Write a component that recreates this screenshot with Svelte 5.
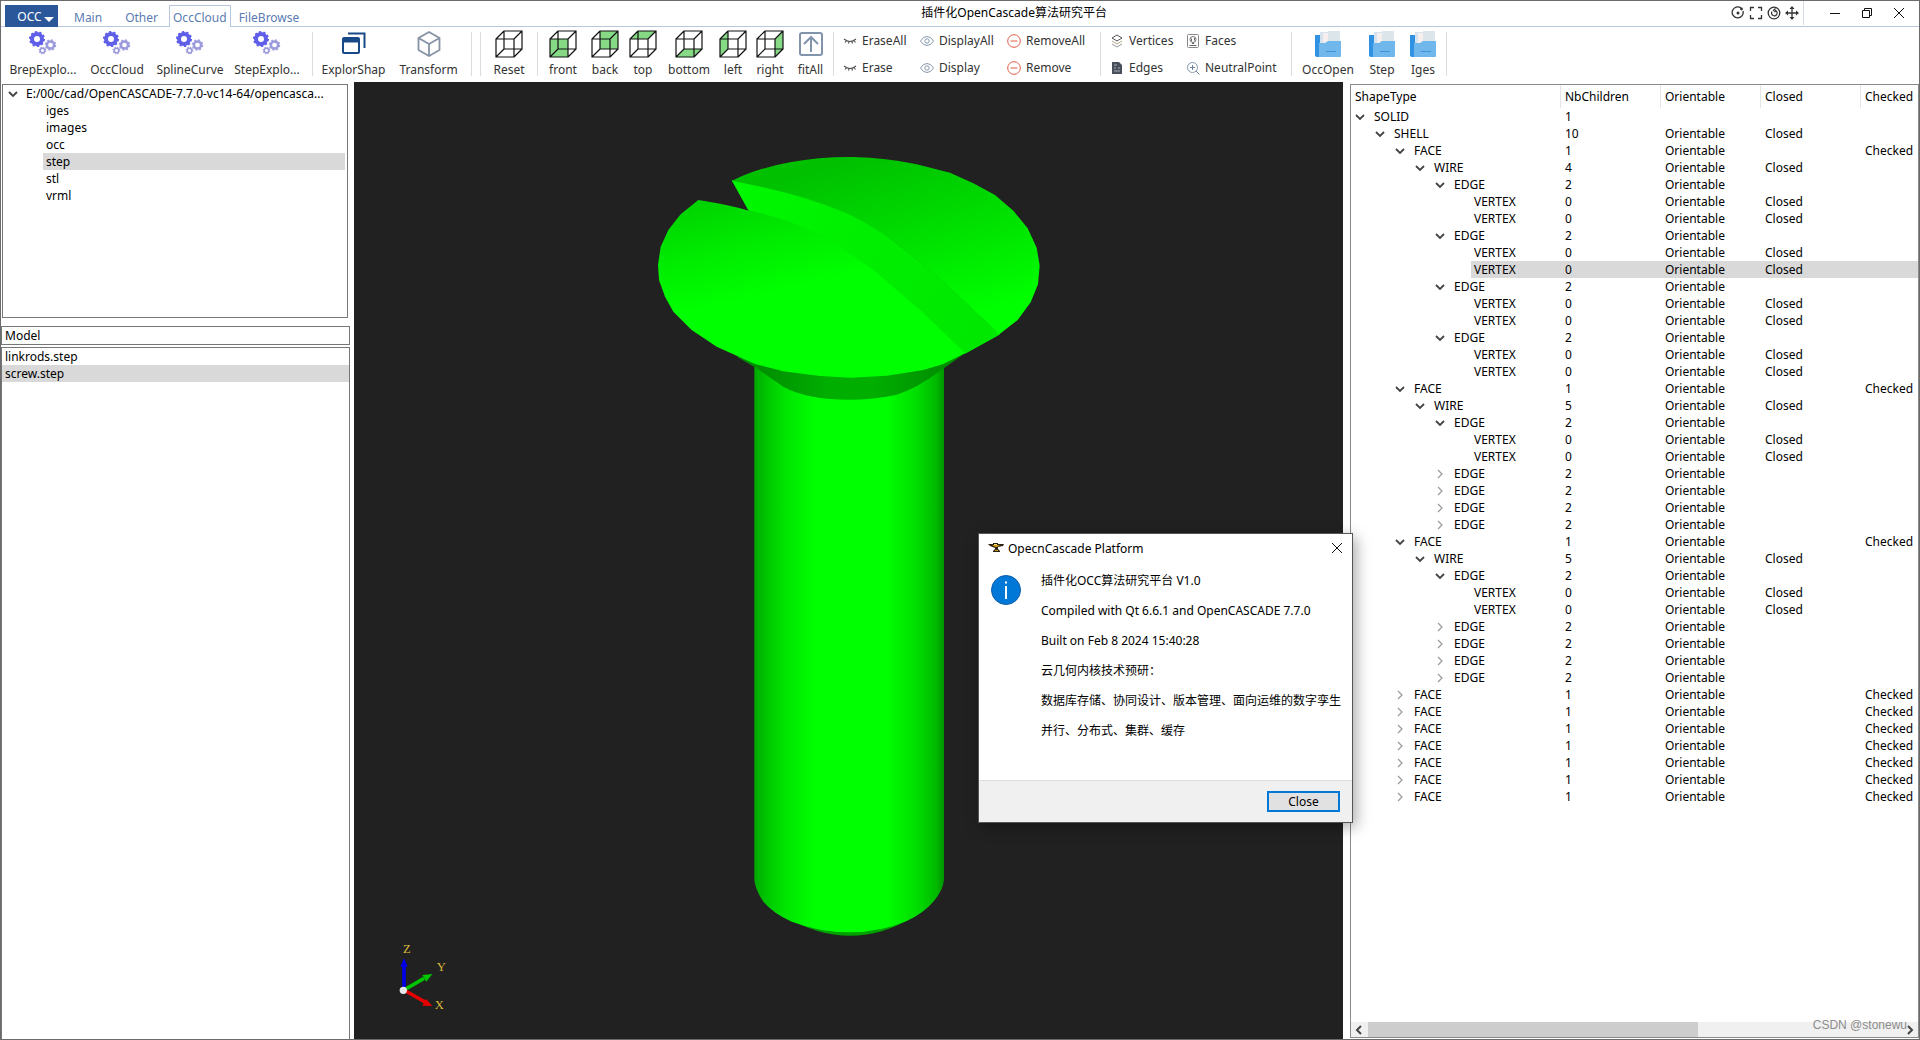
<script lang="ts">
    type Tool = { label: string; icon: string; width: number };

    const tabs = ['Main', 'Other', 'OccCloud', 'FileBrowse'];
    let activeTab = $state('OccCloud');

    const groups: Tool[][] = [
        [
            { label: 'BrepExplo...', icon: 'gears', width: 74 },
            { label: 'OccCloud', icon: 'gears', width: 74 },
            { label: 'SplineCurve', icon: 'gears', width: 72 },
            { label: 'StepExplo...', icon: 'gears', width: 82 }
        ],
        [
            { label: 'ExplorShap', icon: 'windows', width: 73 },
            { label: 'Transform', icon: 'box', width: 77 }
        ],
        [],
        [{ label: 'Reset', icon: 'cube', width: 48 }],
        [
            { label: 'front', icon: 'cube', width: 42 },
            { label: 'back', icon: 'cube', width: 42 },
            { label: 'top', icon: 'cube', width: 34 },
            { label: 'bottom', icon: 'cube', width: 58 },
            { label: 'left', icon: 'cube', width: 30 },
            { label: 'right', icon: 'cube', width: 44 },
            { label: 'fitAll', icon: 'fit', width: 37 }
        ]
    ];

    const fileTools: Tool[] = [
        { label: 'OccOpen', icon: 'folder', width: 64 },
        { label: 'Step', icon: 'folder', width: 44 },
        { label: 'Iges', icon: 'folder', width: 38 }
    ];

    const displayTools = [
        { label: 'EraseAll', icon: 'closed' },
        { label: 'DisplayAll', icon: 'eye' },
        { label: 'RemoveAll', icon: 'minus' },
        { label: 'Erase', icon: 'closed' },
        { label: 'Display', icon: 'eye' },
        { label: 'Remove', icon: 'minus' }
    ];

    const selectTools = [
        { label: 'Vertices', icon: 'layers' },
        { label: 'Faces', icon: 'face' },
        { label: 'Edges', icon: 'doc' },
        { label: 'NeutralPoint', icon: 'zoom' }
    ];

    // highlighted side of the view cube
    const sides: Record<string, string> = {
        front: '1,9 19,9 19,27 1,27',
        back: '9,1 27,1 27,19 9,19',
        top: '1,9 9,1 27,1 19,9',
        bottom: '1,27 9,19 27,19 19,27',
        left: '1,9 9,1 9,19 1,27',
        right: '19,9 27,1 27,19 19,27'
    };

    const folders = ['iges', 'images', 'occ', 'step', 'stl', 'vrml'];
    let folder = $state('step');

    const models = ['linkrods.step', 'screw.step'];
    let model = $state('screw.step');

    type Row = { depth: number; type: string; count: number; open: boolean };

    const row = (depth: number, type: string, count: number, open = true): Row => ({ depth, type, count, open });

    function openEdge() {
        return [row(4, 'EDGE', 2), row(5, 'VERTEX', 0), row(5, 'VERTEX', 0)];
    }

    function sideFace() {
        const closed = Array.from({ length: 4 }, () => row(4, 'EDGE', 2, false));
        return [row(2, 'FACE', 1), row(3, 'WIRE', 5), ...openEdge(), ...closed];
    }

    const rows: Row[] = [
        row(0, 'SOLID', 1),
        row(1, 'SHELL', 10),
        row(2, 'FACE', 1),
        row(3, 'WIRE', 4),
        ...openEdge(),
        ...openEdge(),
        ...openEdge(),
        ...openEdge(),
        ...sideFace(),
        ...sideFace(),
        ...Array.from({ length: 7 }, () => row(2, 'FACE', 1, false))
    ];
    let selectedRow = $state(9);

    const closedTypes = ['SHELL', 'WIRE', 'VERTEX'];

    const about = [
        '插件化OCC算法研究平台 V1.0',
        'Compiled with Qt 6.6.1 and OpenCASCADE 7.7.0',
        'Built on Feb 8 2024 15:40:28',
        '云几何内核技术预研：',
        '数据库存储、协同设计、版本管理、面向运维的数字孪生',
        '并行、分布式、集群、缓存'
    ];
    let showAbout = $state(true);
</script>

{#snippet chevron(open: boolean)}
    <svg class="chevron" viewBox="0 0 10 10" width="10" height="10" aria-hidden="true">
        {#if open}
            <path d="M1 3l4 4 4-4" fill="none" stroke="#444" stroke-width="1.8" />
        {:else}
            <path d="M3 1l4 4-4 4" fill="none" stroke="#999" stroke-width="1.2" />
        {/if}
    </svg>
{/snippet}

{#snippet bigTool(tool: Tool)}
    <button class="tool" style:width="{tool.width}px">
        <svg viewBox="0 0 28 28" width="28" height="28" fill="none" aria-hidden="true">
            {#if tool.icon === 'gears'}
                <circle cx="8" cy="9" r="5" stroke="#5f5fe8" stroke-width="4" />
                <circle cx="8" cy="9" r="7" stroke="#5f5fe8" stroke-width="2" stroke-dasharray="2.2 2.2" />
                <circle cx="21.500" cy="15" r="3.600" stroke="#9c9cdc" stroke-width="2.500" />
                <circle cx="21.500" cy="15" r="5" stroke="#9c9cdc" stroke-width="1.500" stroke-dasharray="1.96 1.96" />
                <circle cx="13.500" cy="20.500" r="2.300" stroke="#9c9cdc" stroke-width="1.600" />
                <circle cx="13.500" cy="20.500" r="3.300" stroke="#9c9cdc" stroke-width="1.200" stroke-dasharray="1.3 1.3" />
            {:else if tool.icon === 'windows'}
                <path d="M8 3.500h16.500V18" stroke="#174a86" stroke-width="2" />
                <rect x="3" y="8" width="16" height="15" rx="1" stroke="#174a86" stroke-width="2" />
                <path d="M3 10.500h16" stroke="#174a86" stroke-width="4" />
            {:else if tool.icon === 'box'}
                <path d="M14 2l10.500 6v12L14 26 3.500 20V8zM3.500 8L14 14l10.500-6M14 14v12" stroke="#8593a5" stroke-width="1.800" stroke-linejoin="round" />
            {:else if tool.icon === 'cube'}
                {#if sides[tool.label]}
                    <polygon points={sides[tool.label]} fill="#86da86" />
                {/if}
                <path d="M1 9h18v18H1zM9 1h18v18H9zM1 9l8-8M19 9l8-8M1 27l8-8M19 27l8-8" stroke="#111" stroke-width="1.200" />
            {:else if tool.icon === 'fit'}
                <rect x="3" y="3" width="22" height="22" rx="2" stroke="#8194ab" stroke-width="2" />
                <path d="M14 22V8M7 14l7-7 7 7" stroke="#8194ab" stroke-width="2" />
            {:else}
                <path d="M1 5h6l2 3v18H1z" fill="#3191e2" />
                <path d="M6 2h9v14H6z" fill="#d5e3ee" />
                <path d="M9 3h8v14H9z" fill="#f7eeee" />
                <path d="M14 1h12v14H14z" fill="#dce6ea" />
                <path d="M5 13h6l3-2h13v15q0 1-1 1H5z" fill="#70b7ec" />
                <path d="M1 9h4v18H3q-2 0-2-2z" fill="#3191e2" />
                <path d="M12 21.500h10" stroke="#3c93dc" />
            {/if}
        </svg>
        <span>{tool.label}</span>
    </button>
{/snippet}

{#snippet smallTool(tool: { label: string; icon: string })}
    <button class="small-tool">
        <svg viewBox="0 0 14 14" width="14" height="14" fill="none" aria-hidden="true">
            {#if tool.icon === 'closed'}
                <path d="M1 5q6 5 12 0M3.500 6.500L2 8.500M6 7.500l-.5 2M9 7.500l.5 2M11 6.500l1.500 2" stroke="#555" stroke-width="1.100" />
            {:else if tool.icon === 'eye'}
                <path d="M.5 7q2.500-4.500 6.500-4.500T13.500 7q-2.500 4.500-6.500 4.500T.5 7z" stroke="#8799ad" />
                <circle cx="7" cy="7" r="2.200" stroke="#8799ad" />
            {:else if tool.icon === 'minus'}
                <circle cx="7" cy="7" r="6.300" stroke="#e25a45" />
                <path d="M3.500 7h7" stroke="#e25a45" />
            {:else if tool.icon === 'layers'}
                <path d="M7 1l5 3-5 3-5-3z" stroke="#555" />
                <path d="M2 7l5 3 5-3" stroke="#b9a78c" />
                <path d="M2 10l5 3 5-3" stroke="#999" />
            {:else if tool.icon === 'face'}
                <rect x="1.500" y=".5" width="11" height="13" rx="1" stroke="#888" />
                <circle cx="7" cy="5.500" r="3" stroke="#777" />
                <path d="M5.500 4.500v2.500M8.500 4v2.500M3.500 11.500h7M6 9.500h2" stroke="#666" />
            {:else if tool.icon === 'doc'}
                <path d="M2 1h7l3 3v9H2z" fill="#4a4f5c" />
                <path d="M4 4h3M4 7h2M8 7h2M4 10h6" stroke="#a9adb8" />
            {:else}
                <circle cx="6.500" cy="6.500" r="5" stroke="#8799ad" />
                <path d="M4 6.500h5M6.500 4v5M10 10l3.500 3.500" stroke="#6f8298" />
            {/if}
        </svg>
        <span>{tool.label}</span>
    </button>
{/snippet}

<div class="window">
    <header class="titlebar">
        <button class="app-menu">OCC<svg viewBox="0 0 10 5" width="10" height="5" aria-hidden="true"><path d="M0 0h10L5 5z" fill="#fff" /></svg></button>
        <nav class="tabs">
            {#each tabs as tab}
                <button class="tab" class:active={tab === activeTab} onclick={() => (activeTab = tab)}>{tab}</button>
            {/each}
        </nav>
        <h1>插件化OpenCascade算法研究平台</h1>
        <div class="quick">
            <button aria-label="Rotate">
                <svg viewBox="0 0 14 14" width="14" height="14" fill="none"><path d="M10 2a5.500 5.500 0 1 0 2 3" stroke="#333" stroke-width="1.300" /><circle cx="7" cy="7" r="1.500" fill="#333" /><circle cx="10.500" cy="3" r="1.400" fill="#333" /></svg>
            </button>
            <button aria-label="Full screen">
                <svg viewBox="0 0 14 14" width="14" height="14" fill="none"><path d="M1.500 5V1.500H5M9 1.500h3.500V5M12.500 9v3.500H9M5 12.500H1.500V9" stroke="#333" stroke-width="1.300" /></svg>
            </button>
            <button aria-label="Refresh">
                <svg viewBox="0 0 14 14" width="14" height="14" fill="none"><circle cx="7" cy="7" r="5.800" stroke="#333" stroke-width="1.300" /><path d="M5 5.500A2.800 2.800 0 1 0 8 4.300M8.500 2.500L6.500 4.300l2 1.700" stroke="#333" stroke-width="1.200" /></svg>
            </button>
            <button aria-label="Pan">
                <svg viewBox="0 0 14 14" width="14" height="14" fill="none"><path d="M7 2v10M2 7h10" stroke="#333" stroke-width="1.300" /><path d="M7 0l2.500 3h-5zM7 14l2.500-3h-5zM0 7l3-2.500v5zM14 7l-3-2.500v5z" fill="#333" /></svg>
            </button>
        </div>
        <div class="controls">
            <button aria-label="Minimize"><svg viewBox="0 0 12 12" width="12" height="12"><path d="M1 6.500h10" stroke="#111" /></svg></button>
            <button aria-label="Restore"><svg viewBox="0 0 12 12" width="12" height="12" fill="none" stroke="#111"><path d="M1.500 3.500h7v7h-7zM3.500 3.500v-2h7v7h-2" /></svg></button>
            <button aria-label="Close window"><svg viewBox="0 0 12 12" width="12" height="12"><path d="M1 1l10 10M11 1L1 11" stroke="#111" /></svg></button>
        </div>
    </header>

    <div class="ribbon">
        {#each groups as group}
            {#each group as tool}
                {@render bigTool(tool)}
            {/each}
            <i class="sep"></i>
        {/each}
        <div class="small-tools display">
            {#each displayTools as tool}
                {@render smallTool(tool)}
            {/each}
        </div>
        <i class="sep"></i>
        <div class="small-tools select">
            {#each selectTools as tool}
                {@render smallTool(tool)}
            {/each}
        </div>
        <i class="sep"></i>
        {#each fileTools as tool}
            {@render bigTool(tool)}
        {/each}
        <i class="sep"></i>
    </div>

    <main>
        <aside class="left">
            <div class="folders">
                <button class="root">{@render chevron(true)}<span>E:/00c/cad/OpenCASCADE-7.7.0-vc14-64/opencasca...</span></button>
                {#each folders as name}
                    <button class="folder" class:selected={name === folder} onclick={() => (folder = name)}>{name}</button>
                {/each}
            </div>
            <div class="model-title">Model</div>
            <div class="models">
                {#each models as name}
                    <button class:selected={name === model} onclick={() => (model = name)}>{name}</button>
                {/each}
            </div>
        </aside>

        <section class="viewport">
            <svg viewBox="0 0 2967 2871" role="img" aria-label="Screw model">
                <defs>
                    <linearGradient id="shaft">
                        <stop offset="0" stop-color="#00a800" />
                        <stop offset=".06" stop-color="#00c400" />
                        <stop offset=".16" stop-color="#00e400" />
                        <stop offset=".32" stop-color="#00ff00" />
                        <stop offset=".7" stop-color="#00ff00" />
                        <stop offset=".86" stop-color="#00dc00" />
                        <stop offset=".96" stop-color="#00b800" />
                        <stop offset="1" stop-color="#009400" />
                    </linearGradient>
                    <linearGradient id="headRight" gradientUnits="userSpaceOnUse" x1="650" y1="50" x2="800" y2="580">
                        <stop offset="0" stop-color="#00c000" />
                        <stop offset=".4" stop-color="#00d800" />
                        <stop offset="1" stop-color="#00ff00" />
                    </linearGradient>
                    <linearGradient id="headLeft" gradientUnits="userSpaceOnUse" x1="230" y1="180" x2="300" y2="480">
                        <stop offset="0" stop-color="#00d400" />
                        <stop offset=".5" stop-color="#00ec00" />
                        <stop offset="1" stop-color="#00ff00" />
                    </linearGradient>
                    <linearGradient id="slot" gradientUnits="userSpaceOnUse" x1="300" y1="150" x2="1000" y2="600">
                        <stop offset="0" stop-color="#00f800" />
                        <stop offset=".5" stop-color="#00ee00" />
                        <stop offset="1" stop-color="#00e800" />
                    </linearGradient>
                    <linearGradient id="neck">
                        <stop offset="0" stop-color="#008400" />
                        <stop offset=".4" stop-color="#00ae00" />
                        <stop offset=".6" stop-color="#00ae00" />
                        <stop offset="1" stop-color="#008400" />
                    </linearGradient>
                </defs>
                <g transform="translate(858 174)">
                    <path d="M440 2330Q530 2387 630 2387T820 2330z" fill="#00a000" />
                    <path d="M343 660H912V2220Q910 2250 880 2285Q850 2320 800 2343Q720 2377 630 2377T455 2345Q400 2320 370 2285Q346 2250 343 2220z" fill="url(#shaft)" />
                    <path d="M290 650L345 682L430 740Q500 779 630 779Q700 779 770 764Q830 745 900 693L975 640L630 600z" fill="url(#neck)" />
                    <!-- slot goes first, wider than it shows, so that no seam is left between the faces -->
                    <path d="M277 122L640 200L1078 583L975 640L500 300L327 212z" fill="url(#slot)" />
                    <path d="M277 122Q480 160 620 220Q700 255 800 335Q900 410 1078 583L975 640L840 510L700 390L600 320L540 285Q450 240 327 212z" fill="url(#slot)" stroke="#00ec00" stroke-width="3" />
                    <path d="M175 180Q270 195 327 212Q450 240 540 285L600 320L700 390L840 510L975 640L910 672L850 690L740 707L633 713L540 708L430 694L345 672L230 620L155 570L100 515L75 470L57 420L54 375L62 320L85 270L122 223z" fill="url(#headLeft)" />
                    <path d="M277 122Q350 85 450 67Q540 50 640 51Q740 53 830 73L930 98L1000 130L1065 165L1120 212L1163 265L1190 323L1199 377L1194 433L1172 487L1133 540L1078 583Q900 410 800 335Q700 255 620 220Q480 160 277 122z" fill="url(#headRight)" />
                </g>
                <g class="axes" transform="translate(78 2544)">
                    <path d="M72 180V105" stroke="#0000e6" stroke-width="11" />
                    <path d="M72 84L83 110H61z" fill="#0000e6" />
                    <path d="M72 180L132 145" stroke="#00c400" stroke-width="11" />
                    <path d="M157 132L139 155L127 135z" fill="#00c400" />
                    <path d="M72 180L135 216" stroke="#e60000" stroke-width="11" />
                    <path d="M157 228L127 227L138 206z" fill="#e60000" />
                    <circle cx="70" cy="181" r="11" fill="#e8e8e8" />
                    <text x="69" y="68">Z</text>
                    <text x="170" y="122">Y</text>
                    <text x="164" y="236">X</text>
                </g>
            </svg>
        </section>

        <aside class="right">
            <div class="shape-tree">
                <table>
                    <thead>
                        <tr>
                            <th class="shape">ShapeType</th>
                            <th>NbChildren</th>
                            <th>Orientable</th>
                            <th>Closed</th>
                            <th class="last">Checked</th>
                        </tr>
                    </thead>
                    <tbody>
                        {#each rows as item, i}
                            <tr class:selected={i === selectedRow} onclick={() => (selectedRow = i)}>
                                <td class="shape" style:padding-left="{item.depth * 20 + 4}px">
                                    <div class="node">
                                        <span class="toggle">{#if item.count > 0}{@render chevron(item.open)}{/if}</span>
                                        <span class="name">{item.type}</span>
                                    </div>
                                </td>
                                <td>{item.count}</td>
                                <td>{item.type === 'SOLID' ? '' : 'Orientable'}</td>
                                <td>{closedTypes.includes(item.type) ? 'Closed' : ''}</td>
                                <td>{item.type === 'FACE' ? 'Checked' : ''}</td>
                            </tr>
                        {/each}
                    </tbody>
                </table>
                <div class="scrollbar">
                    <svg viewBox="0 0 10 10" width="10" height="10"><path d="M7 1L3 5l4 4" fill="none" stroke="#444" stroke-width="2" /></svg>
                    <div class="track"><div class="thumb"></div></div>
                    <svg viewBox="0 0 10 10" width="10" height="10"><path d="M3 1l4 4-4 4" fill="none" stroke="#444" stroke-width="2" /></svg>
                </div>
            </div>
        </aside>
    </main>

    {#if showAbout}
        <div class="dialog" role="dialog" aria-labelledby="about-title">
            <div class="dialog-title">
                <svg viewBox="0 0 16 12" width="16" height="12" aria-hidden="true">
                    <path d="M0 2h5V1h5v1h6l-1 2-5 1v2l2 2v1H5V9l2-2V6L2 4z" fill="#2b2412" />
                    <path d="M4 3h8L9 5H7zM7 8h3v1H7z" fill="#c79a1c" />
                    <path d="M6 2h3v1H6z" fill="#f4e08a" />
                </svg>
                <h2 id="about-title">OpecnCascade Platform</h2>
                <button aria-label="Close dialog" onclick={() => (showAbout = false)}>
                    <svg viewBox="0 0 12 12" width="12" height="12"><path d="M1 1l10 10M11 1L1 11" stroke="#111" /></svg>
                </button>
            </div>
            <div class="dialog-body">
                <svg viewBox="0 0 30 30" width="30" height="30" aria-hidden="true">
                    <circle cx="15" cy="15" r="14.500" fill="#0078d7" stroke="#0d5da8" />
                    <path d="M15 6.500v2M15 11v13" stroke="#fff" stroke-width="2" />
                </svg>
                <div class="about">
                    {#each about as line}
                        <p>{line}</p>
                    {/each}
                </div>
            </div>
            <div class="dialog-footer">
                <button onclick={() => (showAbout = false)}>Close</button>
            </div>
        </div>
    {/if}

    <div class="watermark">CSDN @stonewu</div>
</div>

<style>
    :global(body) {
        margin: 0;
    }

    .window {
        position: relative;
        display: flex;
        flex-direction: column;
        box-sizing: border-box;
        min-height: 100vh;
        border: 1px solid #6b6b6b;
        background: #fff;
        color: #000;
        font-family: "Noto Sans", "Noto Sans CJK SC", sans-serif;
        font-size: 12px;
        line-height: 17px;
    }

    button {
        margin: 0;
        padding: 0;
        border: 0;
        background: none;
        color: inherit;
        font: inherit;
        cursor: pointer;
    }

    h1,
    h2,
    p {
        margin: 0;
        font-size: 12px;
        font-weight: 400;
    }

    svg {
        flex: none;
        display: block;
    }

    /* title bar */
    .titlebar {
        display: grid;
        grid-template-columns: auto auto 1fr auto auto;
        align-items: end;
        height: 26px;
        padding: 0 0 0 4px;
        box-shadow: inset 0 -1px #b8c7db;
    }

    .app-menu {
        display: flex;
        align-items: center;
        justify-content: center;
        gap: 2px;
        width: 53px;
        height: 22px;
        padding-left: 8px;
        background: #2a579a;
        color: #fff;
    }

    .app-menu svg {
        margin-top: 6px;
    }

    .tabs {
        display: flex;
        padding-left: 4px;
    }

    .tab {
        box-sizing: border-box;
        height: 22px;
        padding: 1px 10px 0 11px;
        border: 1px solid transparent;
        border-bottom: 0;
        color: #5b7bb2;
    }

    .tab.active {
        padding: 1px 3px 0;
        border-color: #b8c7db;
        background: #fff;
    }

    .tab.active + .tab {
        padding: 1px 7px 0;
    }

    h1 {
        align-self: start;
        padding-left: 614px;
        line-height: 24px;
        white-space: nowrap;
    }

    .quick,
    .controls {
        display: flex;
        align-self: start;
        align-items: center;
        height: 24px;
    }

    .quick {
        gap: 4px;
        padding-right: 4px;
        border-right: 1px solid #d5dbe3;
    }

    .controls {
        gap: 20px;
        padding: 0 14px 0 25px;
    }

    /* ribbon */
    .ribbon {
        display: flex;
        height: 55px;
        padding-left: 5px;
    }

    .tool {
        display: flex;
        flex: none;
        flex-direction: column;
        align-items: center;
        gap: 3px;
        padding-top: 3px;
        color: #333;
        white-space: nowrap;
    }

    .sep {
        flex: none;
        width: 1px;
        height: 44px;
        margin: 5px 4px;
        background: #dcdcdc;
    }

    .small-tools {
        display: grid;
        grid-template-rows: 27px 27px;
        color: #333;
    }

    .display {
        grid-template-columns: 77px 87px 94px;
    }

    .select {
        grid-template-columns: 76px 106px;
    }

    .small-tool {
        display: flex;
        align-items: center;
        gap: 5px;
        padding-left: 5px;
        white-space: nowrap;
    }

    /* panels */
    main {
        display: grid;
        grid-template-columns: 353px minmax(0, 1fr) 576px;
        flex: 1;
    }

    .left {
        display: flex;
        flex-direction: column;
        gap: 2px;
        padding: 2px 4px 0 0;
    }

    .left button {
        display: block;
        width: 100%;
        text-align: left;
    }

    .folders {
        height: 232px;
        margin: 0 2px 6px 1px;
        border: 1px solid #777;
    }

    .folders .root {
        display: flex;
        align-items: center;
        gap: 8px;
        padding: 0 4px 0 5px;
        box-sizing: border-box;
    }

    .root span {
        white-space: nowrap;
    }

    .folders .folder {
        width: auto;
        margin: 0 2px 0 40px;
        padding-left: 3px;
    }

    .folders .folder.selected {
        width: calc(100% - 42px);
    }

    .model-title {
        height: 17px;
        padding-left: 3px;
        border: 1px solid #777;
    }

    .models {
        flex: 1;
        border: 1px solid #777;
        border-bottom: 0;
    }

    .models button {
        padding-left: 3px;
    }

    .selected {
        background: #d9d9d9;
    }

    .viewport {
        display: grid;
        background: #212121;
    }

    /* follows the panel's height without stretching it */
    .viewport svg {
        width: 100%;
        height: 0;
        min-height: 100%;
    }

    .axes text {
        fill: #d9b93c;
        font-family: "Liberation Serif", serif;
        font-size: 38px;
    }

    .right {
        display: flex;
        padding: 2px 0 1px 7px;
    }

    .shape-tree {
        display: flex;
        flex: 1;
        flex-direction: column;
        min-width: 0;
        border: 1px solid #8a8a8a;
    }

    table {
        width: 100%;
        border-spacing: 0;
        table-layout: fixed;
    }

    th,
    td {
        box-sizing: border-box;
        width: 100px;
        height: 17px;
        padding: 0 0 0 4px;
        font-weight: 400;
        text-align: left;
        white-space: nowrap;
    }

    th {
        height: 23px;
        border-right: 1px solid #e5e5e5;
    }

    th.shape {
        width: 210px;
    }

    th.last {
        width: auto;
        border-right: 0;
    }

    .node {
        display: flex;
        align-items: center;
    }

    .toggle {
        width: 16px;
    }

    .name {
        flex: 1;
        padding-left: 3px;
    }

    tr.selected {
        background: none;
    }

    tr.selected td:not(.shape),
    tr.selected .name {
        background: #d9d9d9;
    }

    .scrollbar {
        display: flex;
        align-items: center;
        gap: 4px;
        height: 15px;
        margin-top: auto;
        padding: 0 3px;
        background: #f0f0f0;
    }

    .track {
        flex: 1;
        height: 15px;
    }

    .thumb {
        width: 62%;
        height: 15px;
        background: #cdcdcd;
    }

    /* about box */
    .dialog {
        position: absolute;
        top: 532px;
        left: 977px;
        width: 375px;
        border: 1px solid #555;
        box-sizing: border-box;
        background: #fff;
        box-shadow: 3px 4px 14px rgba(0, 0, 0, 0.35);
    }

    .dialog-title {
        display: flex;
        align-items: center;
        gap: 4px;
        height: 28px;
        padding: 0 9px;
    }

    .dialog-title h2 {
        flex: 1;
    }

    .dialog-body {
        display: flex;
        gap: 20px;
        height: 218px;
        padding-left: 12px;
    }

    .dialog-body > svg {
        margin-top: 13px;
    }

    .about p {
        height: 30px;
        line-height: 38px;
        white-space: nowrap;
    }

    .dialog-footer {
        display: flex;
        align-items: center;
        justify-content: flex-end;
        height: 41px;
        padding-right: 12px;
        border-top: 1px solid #dfdfdf;
        background: #f0f0f0;
    }

    .dialog-footer button {
        box-sizing: border-box;
        width: 73px;
        height: 21px;
        border: 2px solid #0078d7;
        background: #e1e1e1;
    }

    .watermark {
        position: absolute;
        right: 12px;
        bottom: 5px;
        color: #8c8c8c;
        font-family: "Liberation Sans", sans-serif;
    }
</style>
